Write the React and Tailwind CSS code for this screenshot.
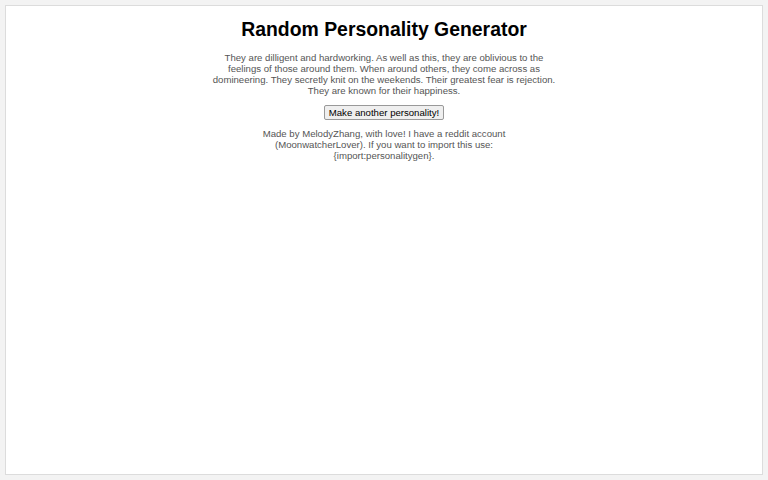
export default function App() {
  return (
    <div className="h-[480px] w-[768px] bg-[#f3f3f3] p-[5px] font-['Liberation_Sans',Arial,sans-serif]">
      <div className="flex h-full flex-col items-center border border-[#dcdcdc] bg-white pt-[9px]">
        <h1 className="text-[19.4px] font-bold leading-[28px] text-black">Random Personality Generator</h1>
        <p className="mt-[9px] w-[360px] text-center text-[9.6px] leading-[11px] text-[#555]">
          They are dilligent and hardworking. As well as this, they are oblivious to the
          <br />
          feelings of those around them. When around others, they come across as
          <br />
          domineering. They secretly knit on the weekends. Their greatest fear is rejection.
          <br />
          They are known for their happiness.
        </p>
        <button className="mt-[9px] h-[15px] rounded-[2px] border border-[#999] bg-[#efefef] px-[4px] text-[9.6px] leading-[13px] text-black">
          Make another personality!
        </button>
        <p className="mt-[8px] w-[260px] text-center text-[9.6px] leading-[11px] text-[#555]">
          Made by MelodyZhang, with love! I have a reddit account
          <br />
          (MoonwatcherLover). If you want to import this use:
          <br />
          {'{import:personalitygen}.'}
        </p>
      </div>
    </div>
  );
}
